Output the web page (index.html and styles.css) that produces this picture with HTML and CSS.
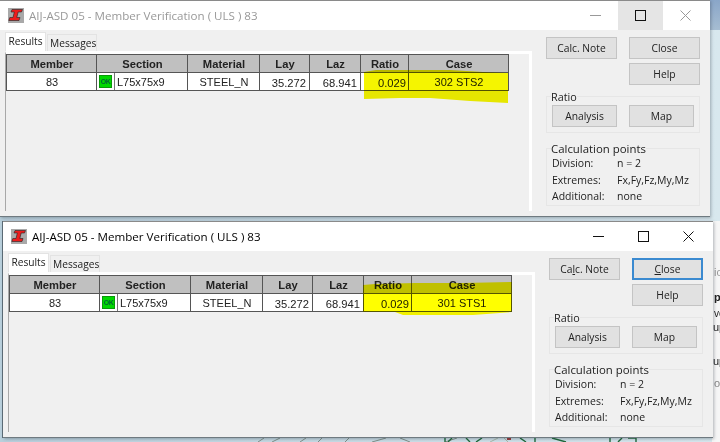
FILE: index.html
```html
<!DOCTYPE html>
<html lang="en">
<head>
<meta charset="utf-8">
<title>Member Verification</title>
<link rel="stylesheet" href="styles.css">
</head>
<body>
<div class="desktop">
  <div class="glass"></div>
  <div class="behind">
    <span class="frag f1">ic</span><span class="frag f2">p</span><span class="frag f3">ve</span><span class="frag f4">up</span><span class="frag f5">up</span><span class="frag f6">o</span>
  </div>
  <svg class="drawing" viewBox="0 0 720 4" aria-hidden="true">
    <path d="M258 4l6-4M272 4l8-4M300 4l6-4M318 4l4-4M345 4l4-4M372 4l14-4M410 4l-10-4M445 4l12-4" stroke="#7f9088" fill="none"/>
    <path d="M445 0v4M448 4l4-4M466 0l4 4M476 4l6-4M520 0l6 4M535 0v4M552 0l14 4M610 4v-4M618 4l4-4M628 0h8v4" stroke="#1f6a3a" stroke-width="1.4" fill="none"/>
    <path d="M490 4l8-4M504 0l4 4" stroke="#a8b8a8" fill="none"/>
    <rect x="507" y="0" width="4" height="2" fill="#9c3b3b"/>
  </svg>

  <section class="window inactive">
    <header class="titlebar">
      <svg class="appicon" viewBox="0 0 16 15" aria-hidden="true">
        <rect width="16" height="15" fill="#a9a9a9"/>
        <path d="M4 1.500h10.500l-1 2.500H10.200L8.800 9.500H12l-1 3H.8l1-3H5L6.300 4H3z" fill="#ec1c1c" stroke="#222" stroke-width=".6"/>
      </svg>
      <span class="title">AIJ-ASD 05 - Member Verification ( ULS ) 83</span>
      <div class="controls">
        <span class="ctl"><svg viewBox="0 0 11 11"><path d="M0 5.500h11"/></svg></span>
        <span class="ctl hover"><svg viewBox="0 0 11 11"><rect x=".5" y=".5" width="10" height="10" class="dark"/></svg></span>
        <span class="ctl"><svg viewBox="0 0 11 11"><path d="M.5.5l10 10M10.500.5l-10 10"/></svg></span>
      </div>
    </header>
    <div class="client">
      <div class="left">
        <div class="tabs"><span class="tab selected">Results</span><span class="tab">Messages</span></div>
        <div class="panel">
          <div class="grid">
            <div class="hd">Member</div><div class="hd">Section</div><div class="hd">Material</div><div class="hd">Lay</div><div class="hd">Laz</div><div class="hd">Ratio</div><div class="hd">Case</div>
            <div class="cell c">83</div>
            <div class="cell sect"><span class="okcell"><span class="ok">OK</span></span><span class="sname">L75x75x9</span></div>
            <div class="cell c">STEEL_N</div>
            <div class="cell r wide">35.272</div>
            <div class="cell r wide">68.941</div>
            <div class="cell r">0.029</div>
            <div class="cell c">302 STS2</div>
          </div>
        </div>
      </div>
      <aside class="side">
        <div class="btns">
          <button class="btn">Calc. Note</button>
          <button class="btn">Close</button>
          <button class="btn second">Help</button>
        </div>
        <fieldset class="group ratio">
          <legend>Ratio</legend>
          <div class="ratio-btns"><button class="btn">Analysis</button><button class="btn">Map</button></div>
        </fieldset>
        <fieldset class="group calc">
          <legend>Calculation points</legend>
          <dl class="facts">
            <dt>Division:</dt><dd>n = 2</dd>
            <dt>Extremes:</dt><dd>Fx,Fy,Fz,My,Mz</dd>
            <dt>Additional:</dt><dd>none</dd>
          </dl>
        </fieldset>
      </aside>
    </div>
    <svg class="marker" viewBox="0 0 710 217" aria-hidden="true">
      <path d="M364 72L376 70L412 70L450 70L483 72L508 73L508 103L470 101L430 98L400 98L364 99Z" fill="#f5f500"/>
    </svg>
  </section>

  <section class="window active">
    <header class="titlebar">
      <svg class="appicon" viewBox="0 0 16 15" aria-hidden="true">
        <rect width="16" height="15" fill="#a9a9a9"/>
        <path d="M4 1.500h10.500l-1 2.500H10.200L8.800 9.500H12l-1 3H.8l1-3H5L6.300 4H3z" fill="#ec1c1c" stroke="#222" stroke-width=".6"/>
      </svg>
      <span class="title">AIJ-ASD 05 - Member Verification ( ULS ) 83</span>
      <div class="controls">
        <span class="ctl"><svg viewBox="0 0 11 11"><path d="M0 5.500h11"/></svg></span>
        <span class="ctl"><svg viewBox="0 0 11 11"><rect x=".5" y=".5" width="10" height="10"/></svg></span>
        <span class="ctl"><svg viewBox="0 0 11 11"><path d="M.5.5l10 10M10.500.5l-10 10"/></svg></span>
      </div>
    </header>
    <div class="client">
      <div class="left">
        <div class="tabs"><span class="tab selected">Results</span><span class="tab">Messages</span></div>
        <div class="panel">
          <div class="grid">
            <div class="hd">Member</div><div class="hd">Section</div><div class="hd">Material</div><div class="hd">Lay</div><div class="hd">Laz</div><div class="hd">Ratio</div><div class="hd">Case</div>
            <div class="cell c">83</div>
            <div class="cell sect"><span class="okcell"><span class="ok">OK</span></span><span class="sname">L75x75x9</span></div>
            <div class="cell c">STEEL_N</div>
            <div class="cell r wide">35.272</div>
            <div class="cell r wide">68.941</div>
            <div class="cell r">0.029</div>
            <div class="cell c">301 STS1</div>
          </div>
        </div>
      </div>
      <aside class="side">
        <div class="btns">
          <button class="btn">Ca<u>l</u>c. Note</button>
          <button class="btn default"><u>C</u>lose</button>
          <button class="btn second">Help</button>
        </div>
        <fieldset class="group ratio">
          <legend>Ratio</legend>
          <div class="ratio-btns"><button class="btn">Analysis</button><button class="btn">Map</button></div>
        </fieldset>
        <fieldset class="group calc">
          <legend>Calculation points</legend>
          <dl class="facts">
            <dt>Division:</dt><dd>n = 2</dd>
            <dt>Extremes:</dt><dd>Fx,Fy,Fz,My,Mz</dd>
            <dt>Additional:</dt><dd>none</dd>
          </dl>
        </fieldset>
      </aside>
    </div>
    <svg class="marker" viewBox="0 0 710 217" aria-hidden="true">
      <path d="M360 64L372 63L412 62L460 62L509 61L509 91L470 94L400 94L392 91L360 91Z" fill="#ffff00"/>
    </svg>
  </section>
</div>
</body>
</html>
```
FILE: styles.css
```css
* { box-sizing: border-box; }
html, body { margin: 0; padding: 0; }
body { width: 720px; height: 442px; overflow: hidden; font-family: "Open Sans", "Noto Sans", sans-serif; }

.desktop {
  position: relative;
  width: 720px;
  height: 442px;
  overflow: hidden;
  background: linear-gradient(90deg, #b9d0dc, #d8e8ee);
}
.glass {
  position: absolute;
  left: 700px; top: 0;
  width: 20px; height: 30px;
  background: linear-gradient(180deg, #8aa6c8, #a6bdd2);
}
.behind {
  position: absolute;
  left: 712px; top: 221px;
  width: 8px; height: 221px;
  background: #f6f6f6;
  font: 11px "Liberation Sans", sans-serif;
  color: #222;
  overflow: hidden;
}
.frag { position: absolute; left: 2px; line-height: 12px; }
.f1 { top: 45px; left: 2px; color: #9a9a9a; }
.f2 { top: 70px; left: 2px; font-weight: bold; }
.f3 { top: 87px; left: 2px; font-size: 10px; }
.f4 { top: 100px; left: 1px; }
.f5 { top: 134px; left: 1px; }
.f6 { top: 156px; left: 2px; color: #888; }
.drawing { position: absolute; left: 0; top: 438px; width: 720px; height: 4px; }

.window {
  position: absolute;
  width: 710px;
  height: 217px;
  display: flex;
  flex-direction: column;
  background: #f0f0f0;
  border-top: 1px solid #8a8a8a;
  border-bottom: 1px solid #6f7a80;
  box-shadow: 1px 1px 3px rgba(40, 50, 60, .35);
}
.window.inactive { left: 0; top: 0; }
.window.active { left: 3px; top: 221px; box-shadow: -1px 0 0 #5a6a74, 1px 1px 3px rgba(40, 50, 60, .35); }

.titlebar {
  flex: 0 0 29px;
  display: flex;
  align-items: center;
  background: #fff;
  padding-left: 8px;
}
.appicon { width: 16px; height: 15px; flex: none; margin-right: 5px; }
.title { font-size: 11.600px; white-space: nowrap; }
.inactive .title { color: #999; }
.active .title { color: #000; }
.controls { margin-left: auto; display: flex; height: 100%; margin-right: 2px; }
.ctl { width: 45px; height: 100%; display: flex; align-items: center; justify-content: center; }
.ctl.hover { background: #e5e5e5; }
.ctl svg { width: 11px; height: 11px; fill: none; stroke: #111; stroke-width: 1; }
.inactive .ctl svg { stroke: #999; }
.inactive .ctl svg .dark { stroke: #111; }

.client { flex: 1; display: flex; min-height: 0; padding-left: 5px; }
.left { width: 527px; flex: none; display: flex; flex-direction: column; padding-top: 2px; }
.tabs { display: flex; height: 19px; align-items: flex-end; font: 10.200px "Open Sans", sans-serif; color: #222; }
.tab {
  height: 17px;
  padding: 0 4px 0 2px;
  width: 50px;
  text-align: center;
  line-height: 16px;
  border: 1px solid #e3e3e3;
  border-bottom: 0;
  background: #f0f0f0;
  margin-left: 1px;
}
.tab.selected { height: 19px; width: 41px; margin-left: 0; padding: 0 2px; background: #fff; line-height: 17px; }
.panel {
  flex: 1;
  margin-bottom: 5px;
  background: #f0f0f0;
  border-top: 3px solid #fff;
  border-right: 3px solid #fff;
  border-left: 1px solid #a8a8a8;
}
.grid {
  display: grid;
  width: 503px;
  grid-template-columns: 89px 90px 71px 49px 50px 47px 99px;
  grid-template-rows: 17px 17px;
  gap: 1px;
  padding: 1px;
  background: #555;
  font: 11px "Liberation Sans", sans-serif;
  color: #222;
}
.hd {
  background: #c0c0c0;
  font-weight: bold;
  font-size: 11.200px;
  text-align: center;
  line-height: 18px;
  padding-left: 1px;
}
.cell { background: #fff; line-height: 18px; white-space: nowrap; font-size: 11px; }
.cell.c { text-align: center; padding-left: 1px; }
.cell.r { text-align: right; padding: 1px 2px 0 0; font-size: 11.200px; }
.cell.r.wide { padding-right: 3px; }
.sect { display: flex; }
.okcell { width: 18px; flex: none; border-right: 1px solid #777; display: flex; align-items: center; justify-content: center; }
.ok {
  width: 13px; height: 13px;
  background: #00d800;
  border: 1px solid #089a08;
  color: #063;
  font: bold 7px/11px "Liberation Sans", sans-serif;
  text-align: center;
  letter-spacing: -.5px;
}
.sname { padding-left: 2px; }

.side { width: 154px; margin-left: 14px; padding-top: 7px; font: 10.500px "Open Sans", sans-serif; color: #222; }
.btn {
  height: 22px;
  padding: 0;
  background: #e1e1e1;
  border: 1px solid #c4c4c4;
  outline: 0;
  font: inherit;
  color: #222;
  font-size: 10.300px;
}
.btn.default { border: 2px solid #3b8ad0; }
.btns { display: grid; grid-template-columns: 71px 71px; column-gap: 12px; row-gap: 4px; }
.btn.second { grid-column: 2; }
.group {
  margin: 0;
  padding: 0;
  border: 1px solid #e6e6e6;
  min-width: 0;
}
.group legend { padding: 0; margin-left: 4px; line-height: 13px; font-size: 10.800px; }
.calc legend { font-size: 11.400px; }
.ratio { margin-top: 5px; height: 43px; }
.ratio-btns { display: grid; grid-template-columns: 65px 65px; column-gap: 12px; padding: 2px 0 0 5px; }
.calc { margin-top: 9px; height: 64px; }
.facts { margin: 0; padding-left: 5px; display: grid; grid-template-columns: 65px 1fr; grid-auto-rows: 16.500px; line-height: 16px; font-size: 10.500px; }
.facts dt, .facts dd { margin: 0; white-space: nowrap; }

.marker { position: absolute; left: 0; top: -1px; width: 710px; height: 217px; mix-blend-mode: multiply; pointer-events: none; }
```
